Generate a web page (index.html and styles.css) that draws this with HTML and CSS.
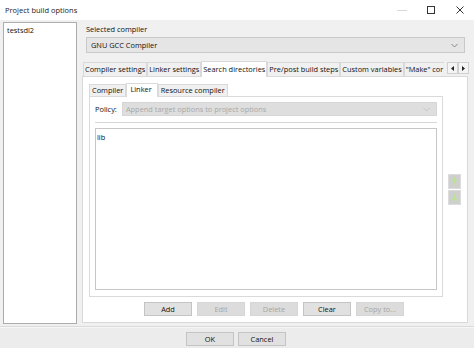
FILE: index.html
```html
<!DOCTYPE html>
<html lang="en">

<head>
    <meta charset="UTF-8">
    <title>Project build options</title>
    <link rel="stylesheet" href="styles.css">
</head>

<body>
    <div class="window">
        <div class="titlebar">
            <span class="title">Project build options</span>
            <div class="controls">
                <span class="ctl">
                    <svg width="10" height="10" viewBox="0 0 10 10"><path d="M0 5.5h10" stroke="#d8d8d8" stroke-width="1"/></svg>
                </span>
                <span class="ctl">
                    <svg width="10" height="10" viewBox="0 0 10 10"><rect x="1.5" y="1.5" width="7" height="7" fill="none" stroke="#333" stroke-width="1"/></svg>
                </span>
                <span class="ctl">
                    <svg width="10" height="10" viewBox="0 0 10 10"><path d="M1.5 1.5l7 7M8.5 1.5l-7 7" stroke="#333" stroke-width="1"/></svg>
                </span>
            </div>
        </div>

        <div class="main">
            <div class="targets">
                <div class="target">testsdl2</div>
            </div>

            <div class="settings">
                <div class="compiler-select">
                    <div class="label">Selected compiler</div>
                    <div class="combo">
                        <span>GNU GCC Compiler</span>
                        <svg width="7" height="5" viewBox="0 0 7 5"><path d="M0.5 1l3 3 3-3" fill="none" stroke="#888" stroke-width="1"/></svg>
                    </div>
                </div>

                <div class="tabs">
                    <div class="tab">Compiler settings</div>
                    <div class="tab">Linker settings</div>
                    <div class="tab active">Search directories</div>
                    <div class="tab">Pre/post build steps</div>
                    <div class="tab">Custom variables</div>
                    <div class="tab clipped">"Make" cor</div>
                    <div class="tab-scroll">
                        <span class="arrow">
                            <svg width="3" height="5" viewBox="0 0 3 5"><path d="M3 0v5L0 2.5z" fill="#222"/></svg>
                        </span>
                        <span class="arrow">
                            <svg width="3" height="5" viewBox="0 0 3 5"><path d="M0 0v5l3-2.5z" fill="#222"/></svg>
                        </span>
                    </div>
                </div>

                <div class="tab-panel">
                    <div class="subtabs">
                        <div class="subtab">Compiler</div>
                        <div class="subtab active">Linker</div>
                        <div class="subtab">Resource compiler</div>
                    </div>

                    <div class="subrow">
                        <div class="subpanel">
                            <div class="policy">
                                <span class="policy-label">Policy:</span>
                                <div class="combo disabled">
                                    <span>Append target options to project options</span>
                                    <svg width="7" height="5" viewBox="0 0 7 5"><path d="M0.5 1l3 3 3-3" fill="none" stroke="#c4c4c4" stroke-width="1"/></svg>
                                </div>
                            </div>
                            <div class="sep"></div>
                            <div class="dirlist">
                                <div class="dir">lib</div>
                            </div>
                        </div>
                        <div class="movers">
                            <span class="mover">
                                <svg width="7" height="9" viewBox="0 0 7 9"><path d="M3.5 1v7M1 3.5l2.5-2.5 2.5 2.5" fill="none" stroke="#bde09a" stroke-width="1.2"/></svg>
                            </span>
                            <span class="mover">
                                <svg width="7" height="9" viewBox="0 0 7 9"><path d="M3.5 1v7M1 5.5l2.5 2.5 2.5-2.5" fill="none" stroke="#bde09a" stroke-width="1.2"/></svg>
                            </span>
                        </div>
                    </div>

                    <div class="actions">
                        <button class="btn">Add</button>
                        <button class="btn" disabled>Edit</button>
                        <button class="btn" disabled>Delete</button>
                        <button class="btn">Clear</button>
                        <button class="btn" disabled>Copy to...</button>
                    </div>
                </div>
            </div>
        </div>

        <div class="footer">
            <button class="btn">OK</button>
            <button class="btn">Cancel</button>
        </div>
    </div>
</body>

</html>
```

FILE: styles.css
```css
body {
    margin: 0;
    padding: 0;
    font-family: "Open Sans", "Noto Sans", sans-serif;
    font-size: 7.4px;
    color: #111111;
    background-color: #f0f0f0;
}

.window {
    width: 474px;
    height: 348px;
    display: flex;
    flex-direction: column;
    overflow: hidden;
}

/* Title bar */
.titlebar {
    height: 20px;
    flex-shrink: 0;
    background-color: #ffffff;
    display: flex;
    align-items: center;
    justify-content: space-between;
    padding-left: 5px;
}

.title {
    font-size: 7.5px;
    color: #222;
}

.controls {
    display: flex;
    height: 100%;
}

.ctl {
    width: 29px;
    display: flex;
    align-items: center;
    justify-content: center;
}

/* Main area */
.main {
    display: flex;
    height: 307px;
    flex-shrink: 0;
    padding: 2px 5px 0 3px;
    box-sizing: border-box;
    border-bottom: 1px solid #dadada;
}

.targets {
    width: 74px;
    flex-shrink: 0;
    height: 302px;
    box-sizing: border-box;
    background-color: #ffffff;
    border: 1px solid #acacac;
    padding: 2px 3px;
}

.settings {
    width: 387px;
    flex-shrink: 0;
    margin-left: 5px;
    display: flex;
    flex-direction: column;
}

.compiler-select {
    padding: 1px 0 0 4px;
    height: 38px;
    box-sizing: border-box;
}

.label {
    height: 13px;
    line-height: 13px;
}

.combo {
    display: flex;
    align-items: center;
    justify-content: space-between;
    box-sizing: border-box;
    height: 16px;
    margin-top: 1px;
    padding: 0 6px 0 4px;
    background-color: #e5e5e5;
    border: 1px solid #c9c9c9;
    width: 379px;
}

.combo.disabled {
    height: 14px;
    width: 316px;
    margin: 0;
    padding: 0 6px 0 3px;
    background-color: #dedede;
    border-color: #d6d6d6;
    color: #a8a8a8;
}

/* Notebook tabs */
.tabs {
    display: flex;
    align-items: flex-end;
    height: 16px;
    padding-left: 1px;
}

.tab {
    height: 14px;
    line-height: 13px;
    padding: 0 1px;
    box-sizing: border-box;
    border: 1px solid #d9d9d9;
    border-bottom: none;
    background-color: #f0f0f0;
    white-space: nowrap;
}

.tab.active {
    height: 16px;
    background-color: #ffffff;
    line-height: 14px;
    margin-bottom: -1px;
    position: relative;
    z-index: 1;
}

.tab.clipped {
    border-right: none;
}

.tab-scroll {
    display: flex;
    margin-left: auto;
    align-self: flex-start;
    margin-top: 2px;
}

.arrow {
    width: 11px;
    height: 12px;
    box-sizing: border-box;
    border: 1px solid #d0d0d0;
    background-color: #f4f4f4;
    display: flex;
    align-items: center;
    justify-content: center;
}

.tab-panel {
    width: 386px;
    height: 247px;
    box-sizing: border-box;
    background-color: #ffffff;
    border: 1px solid #d9d9d9;
    padding: 6px 5px 0 6px;
    display: flex;
    flex-direction: column;
}

.subtabs {
    display: flex;
    align-items: flex-end;
    height: 13px;
}

.subtab {
    height: 12px;
    line-height: 11px;
    padding: 0 2px;
    box-sizing: border-box;
    border: 1px solid #dadada;
    border-bottom: none;
    background-color: #f0f0f0;
}

.subtab.active {
    height: 14px;
    line-height: 10px;
    padding: 0 5px 0 3px;
    background-color: #ffffff;
    margin-bottom: -1px;
    position: relative;
    z-index: 1;
}

.subrow {
    display: flex;
    align-items: center;
}

.subpanel {
    width: 354px;
    height: 201px;
    box-sizing: border-box;
    border: 1px solid #dadada;
    padding: 5px 5px 0 5px;
}

.policy {
    display: flex;
    align-items: center;
    height: 14px;
}

.policy-label {
    width: 27px;
}

.sep {
    height: 1px;
    background-color: #d6d6d6;
    margin: 6px 0 5px 0;
}

.dirlist {
    height: 162px;
    box-sizing: border-box;
    border: 1px solid #c6c6c6;
    padding: 2px 1px;
}

.dir {
    line-height: 12px;
}

.movers {
    display: flex;
    flex-direction: column;
    margin-left: 5px;
    margin-top: -14px;
    gap: 1px;
}

.mover {
    width: 13px;
    height: 15px;
    box-sizing: border-box;
    background-color: #cfcfcf;
    border: 1px solid #dcdcdc;
    display: flex;
    align-items: center;
    justify-content: center;
}

.actions {
    display: flex;
    gap: 5px;
    padding-left: 55px;
    margin-top: 5px;
}

.btn {
    width: 48px;
    height: 14px;
    padding: 0;
    font-family: inherit;
    font-size: 7.4px;
    color: #111111;
    background-color: #e1e1e1;
    border: 1px solid #c4c4c4;
    border-radius: 0;
}

.btn:disabled {
    color: #a6a6a6;
    background-color: #dcdcdc;
    border-color: #d6d6d6;
}

/* Footer */
.footer {
    flex: 1;
    display: flex;
    gap: 4px;
    padding-left: 186px;
    padding-top: 4px;
    background-color: #ececec;
    border-top: 1px solid #f6f6f6;
}
```
